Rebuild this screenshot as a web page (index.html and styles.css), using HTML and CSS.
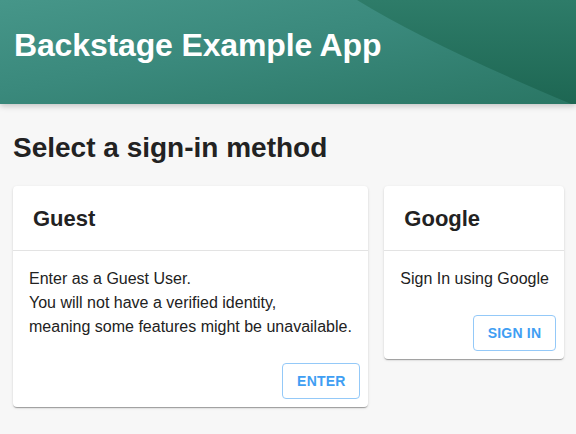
FILE: index.html
```html
<!DOCTYPE html>
<html>
<head>
<meta charset="utf-8">
<link rel="stylesheet" href="styles.css">
</head>
<body>
<header class="header">
  <svg class="wave" viewBox="0 0 576 104" preserveAspectRatio="none">
    <defs>
      <linearGradient id="g2" x1="0" y1="0" x2="0" y2="1">
        <stop offset="0" stop-color="#2e7c69"/>
        <stop offset="1" stop-color="#1d6652"/>
      </linearGradient>
    </defs>
    <path d="M357 0 Q430 45 576 106 L576 0 Z" fill="url(#g2)"/>
  </svg>
  <h1 class="app-title">Backstage Example App</h1>
</header>
<main class="content">
  <h2 class="page-title">Select a sign-in method</h2>
  <div class="cards">
    <section class="card card-guest">
      <div class="card-header"><h3 class="card-title">Guest</h3></div>
      <div class="card-body">
        <p class="card-text">Enter as a Guest User.<br>You will not have a verified identity,<br>meaning some features might be unavailable.</p>
      </div>
      <div class="card-actions"><button class="btn btn-enter">ENTER</button></div>
    </section>
    <section class="card card-google">
      <div class="card-header"><h3 class="card-title">Google</h3></div>
      <div class="card-body">
        <p class="card-text">Sign In using Google</p>
      </div>
      <div class="card-actions"><button class="btn btn-signin">SIGN IN</button></div>
    </section>
  </div>
</main>
</body>
</html>
```
FILE: styles.css
```css
html, body {
  margin: 0;
  padding: 0;
}
body {
  background: #f7f7f7;
  font-family: "Liberation Sans", Arial, sans-serif;
  color: rgba(0, 0, 0, 0.87);
  width: 576px;
  height: 434px;
  overflow: hidden;
}
.header {
  position: relative;
  height: 104px;
  background: linear-gradient(170deg, #469689 0%, #3a897c 45%, #2a7664 100%);
  box-shadow: 0 2px 6px rgba(0, 0, 0, 0.22);
  overflow: hidden;
}
.wave {
  position: absolute;
  left: 0;
  top: 0;
  width: 576px;
  height: 104px;
}
.app-title {
  position: relative;
  margin: 0;
  padding: 25px 0 0 14px;
  font-size: 32px;
  font-weight: 700;
  line-height: 40px;
  letter-spacing: -0.15px;
  color: #ffffff;
}
.content {
  padding: 28px 12px 0 12px;
}
.page-title {
  margin: 0 0 0 1px;
  font-size: 28px;
  font-weight: 700;
  line-height: 32px;
  color: #222222;
}
.cards {
  display: flex;
  align-items: flex-start;
  gap: 16px;
  margin: 22px 0 0 1px;
}
.card {
  background: #ffffff;
  border-radius: 4px;
  box-shadow: 0 2px 1px -1px rgba(0, 0, 0, 0.2), 0 1px 1px 0 rgba(0, 0, 0, 0.14), 0 1px 3px 0 rgba(0, 0, 0, 0.12);
  display: flex;
  flex-direction: column;
}
.card-guest { width: 356px; }
.card-google { width: 180px; }
.card-header {
  padding: 17px 20px 15px 20px;
  border-bottom: 1px solid #e3e3e3;
}
.card-title {
  margin: 0;
  font-size: 22px;
  font-weight: 700;
  line-height: 32px;
  color: #222222;
}
.card-body {
  padding: 16px 8px 16px 16px;
}
.card-text {
  margin: 0;
  font-size: 16px;
  line-height: 24px;
  color: #222222;
  white-space: nowrap;
}
.card-actions {
  display: flex;
  justify-content: flex-end;
  padding: 8px;
}
.btn {
  font-family: "Liberation Sans", Arial, sans-serif;
  font-size: 14px;
  font-weight: 700;
  color: #3f9ef3;
  background: #ffffff;
  border: 1px solid #94c9f8;
  border-radius: 4px;
  height: 36px;
  padding: 0;
  white-space: nowrap;
  letter-spacing: 0.2px;
}
.btn-enter { width: 78px; }
.btn-signin { width: 83px; }
```
